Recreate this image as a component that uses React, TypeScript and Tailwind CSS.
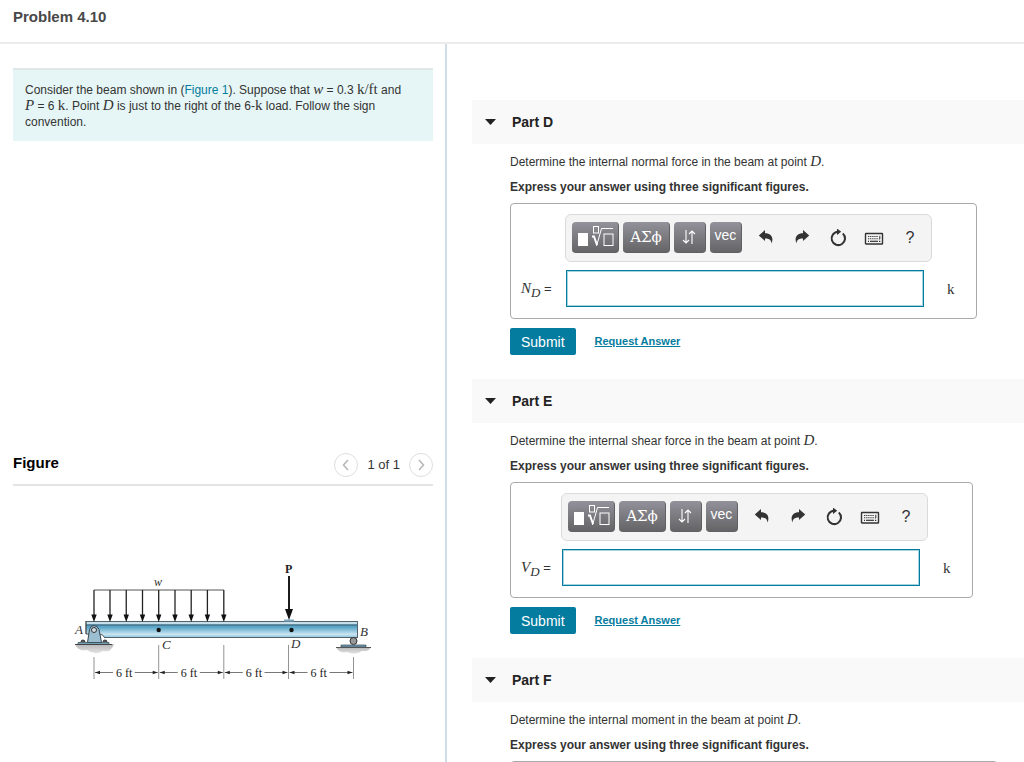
import React from "react";

type Part = {
  name: string;
  quantity: string;
  symbol?: string;
  labelWidth?: string;
  unit?: string;
};

const parts: Part[] = [
  { name: "Part D", quantity: "normal force", symbol: "N", labelWidth: "w-11", unit: "k" },
  { name: "Part E", quantity: "shear force", symbol: "V", labelWidth: "w-10", unit: "k" },
  { name: "Part F", quantity: "moment" },
];

function Sym({ children }: { children: React.ReactNode }) {
  return <i className="font-['Liberation_Serif',serif] text-[15px] leading-none">{children}</i>;
}

function Unit({ children }: { children: React.ReactNode }) {
  return <span className="font-['Liberation_Serif',serif] text-[15px] leading-none">{children}</span>;
}

function ToolButton({ label, width, children }: { label: string; width: string; children: React.ReactNode }) {
  return (
    <button
      type="button"
      aria-label={label}
      className={`${width} flex h-[31px] items-center justify-center rounded border-r border-b border-[#606063] bg-linear-to-b from-[#93919a] to-[#656567] text-white`}
    >
      {children}
    </button>
  );
}

function IconButton({ label, children }: { label: string; children: React.ReactNode }) {
  return (
    <button type="button" aria-label={label} className="flex h-[31px] w-9 items-center justify-center text-[#333]">
      {children}
    </button>
  );
}

function Toolbar() {
  return (
    <div className="flex h-12 items-start rounded-md border border-[#dadada] bg-[#f4f4f4] pt-[7px] pl-[6px]" role="toolbar">
      <div className="flex gap-1">
        <ToolButton label="Templates" width="w-[47px]">
          <svg width="38" height="24" viewBox="0 0 38 24" fill="none" stroke="white">
            <rect x="2" y="8" width="10" height="13" fill="white" stroke="none" />
            <rect x="17.500" y="1.500" width="5" height="6.500" />
            <path d="M16 11.500h2l3 8.500" strokeWidth="2" />
            <path d="M20.500 21L25.500 3.500H37" />
            <rect x="28" y="9" width="9" height="11.500" />
          </svg>
        </ToolButton>
        <ToolButton label="Symbols" width="w-[47px]">
          <span className="font-['DejaVu_Serif',serif] text-[15px] leading-none">ΑΣϕ</span>
        </ToolButton>
        <ToolButton label="Arrows" width="w-8">
          <svg width="14" height="16" viewBox="0 0 14 16" fill="none" stroke="white" strokeWidth="1.1">
            <path d="M4 1v13M1 11l3 3 3-3M10 15V2M7 5l3-3 3 3" />
          </svg>
        </ToolButton>
        <ToolButton label="Vector" width="w-8">
          <span className="pb-1 text-sm leading-none">vec</span>
        </ToolButton>
      </div>
      <div className="ml-[6px] flex">
        <IconButton label="Undo">
          <svg width="16" height="16" viewBox="0 0 16 16" fill="currentColor">
            <path d="M.8 5.500L7 0v3.200c4.800 0 7.400 2.600 7.400 6.200 0 1.500-.4 2.900-1 4 0-3.400-1.800-5-6.400-5V11z" />
          </svg>
        </IconButton>
        <IconButton label="Redo">
          <svg width="16" height="16" viewBox="0 0 16 16" fill="currentColor">
            <path d="M15.200 5.500L9 0v3.200c-4.800 0-7.400 2.600-7.400 6.200 0 1.500.4 2.900 1 4 0-3.400 1.800-5 6.400-5V11z" />
          </svg>
        </IconButton>
        <IconButton label="Reset">
          <svg width="18" height="18" viewBox="0 0 18 18" fill="none" stroke="currentColor" strokeWidth="2">
            <path d="M13.800 4.400A6.700 6.700 0 1 1 9 2.700" />
            <path d="M8 -.5l4.200 3.300L8 6.100z" fill="currentColor" stroke="none" />
          </svg>
        </IconButton>
        <IconButton label="Keyboard">
          <svg width="20" height="14" viewBox="0 0 20 14" fill="none" stroke="currentColor">
            <rect x="1.500" y="2.500" width="17" height="10.500" rx=".5" strokeWidth="1.400" />
            <path d="M4 5.500h10M4 7.700h10" strokeWidth="1.100" strokeDasharray="1.300 .8" />
            <path d="M6 10.300h8" strokeWidth="1.200" />
            <path d="M4 10.300h1M15 10.300h1.300" strokeWidth="1.200" />
            <path d="M15.800 4.800v3.200h-1" />
          </svg>
        </IconButton>
        <IconButton label="Help">
          <span className="text-base leading-none">?</span>
        </IconButton>
      </div>
    </div>
  );
}

function AnswerForm({ part }: { part: Part }) {
  const id = part.name.replace(" ", "-");
  return (
    <>
      <div className="mt-1 flex w-fit items-end rounded border border-[#a9a9a9] px-[10px] pt-[10px] pb-[11px]">
        <label htmlFor={id} className={`${part.labelWidth} flex h-9 items-center text-[13px] whitespace-nowrap`}>
          <span className="whitespace-pre">
            <Sym>{part.symbol}</Sym>
            <sub className="text-[13px]">
              <i className="font-['Liberation_Serif',serif]">D</i>
            </sub>{" "}
            =
          </span>
        </label>
        <div className="flex w-[367px] flex-col gap-2">
          <Toolbar />
          <input
            id={id}
            type="text"
            className="ml-px h-[37px] w-[358px] border border-[#047c9f] bg-white px-2 text-sm shadow-[inset_0_0_0_1px_#a5d3e0] outline-none"
          />
        </div>
        <span className="flex h-9 min-w-[34px] items-center pl-[15px]">
          <Unit>{part.unit}</Unit>
        </span>
      </div>
      <div className="mt-[9px] flex items-center gap-[19px]">
        <button type="button" className="h-[27px] rounded-xs bg-[#047c9f] px-[11px] text-sm text-white">
          Submit
        </button>
        <a href="#answer" className="text-[11px] font-bold text-[#047c9f] underline">
          Request Answer
        </a>
      </div>
    </>
  );
}

function PartSection({ part }: { part: Part }) {
  return (
    <section className="mb-6">
      <h2 className="bg-[#f9f9f9]">
        <button type="button" className="flex h-11 w-full items-center gap-4 pl-[13px] text-sm font-bold text-[#222]">
          <svg width="11" height="6" viewBox="0 0 11 6" fill="currentColor">
            <path d="M0 0h11L5.500 6z" />
          </svg>
          {part.name}
        </button>
      </h2>
      <div className="pl-[38px]">
        <p className="pt-2 text-xs leading-5">
          Determine the internal {part.quantity} in the beam at point <Sym>D</Sym>.
        </p>
        <p className="pt-1 text-xs leading-[23px] font-bold">Express your answer using three significant figures.</p>
        {part.symbol ? (
          <AnswerForm part={part} />
        ) : (
          <div className="mt-1 h-[116px] w-[488px] rounded border border-[#a9a9a9]" />
        )}
      </div>
    </section>
  );
}

const loads = [24, 40, 56.25, 72.5, 88.7, 105, 121.2, 137.4, 153.8];
const dims = [24, 88.7, 153.8, 218.5, 283.5];

function BeamFigure() {
  return (
    <svg
      width="310"
      height="128"
      viewBox="0 0 310 128"
      className="font-['Liberation_Serif',serif]"
      role="img"
      aria-label="Loaded beam"
    >
      <defs>
        <linearGradient id="beam" x1="0" y1="0" x2="0" y2="1">
          <stop offset="0" stopColor="#5aa5c7" />
          <stop offset=".35" stopColor="#5aa5c7" />
          <stop offset=".8" stopColor="#cbe6f2" />
          <stop offset="1" stopColor="#8cc3dc" />
        </linearGradient>
        <linearGradient id="ground" x1="0" y1="0" x2="0" y2="1">
          <stop offset="0" stopColor="#b5b5b5" />
          <stop offset="1" stopColor="#e6e6e6" />
        </linearGradient>
      </defs>
      <path d="M5 84q3 8 12 6 8 6 16 1 8 2 11-7z" fill="url(#ground)" />
      <path d="M266 87q3 7 11 5 8 4 15-1 7 1 9-4z" fill="url(#ground)" />
      <rect x="16" y="61.500" width="271.500" height="16" fill="url(#beam)" stroke="#54636c" />
      <rect x="16.500" y="62" width="270.500" height="2.500" fill="#c6dfea" />
      <path d="M16 65h271" stroke="#35576a" />
      <path d="M15 74h15q5 1 6 9H15z" fill="white" />
      <path d="M16 61v13h4M29 74q4 0 6 4" fill="none" stroke="#555" />
      <path d="M11 82a2 2 0 0 1 4 0M33 82a2 2 0 0 1 4 0" fill="#555" stroke="#333" />
      <path d="M17.500 82.500l2-13q1-4 4.500-4t5 4l2.500 13z" fill="#9bbed0" stroke="#344650" />
      <circle cx="24" cy="70" r="2.500" fill="#d3dfe4" stroke="#333" />
      <path d="M8 82.500h31v2H8z" fill="#73a1b5" stroke="#344650" strokeWidth=".7" />
      <path d="M5 84.500h37" stroke="#444" />
      <circle cx="283.500" cy="81" r="3.500" fill="#999" stroke="#333" />
      <path d="M271 85h25v2h-25z" fill="#73a1b5" stroke="#344650" strokeWidth=".7" />
      <path d="M266 87.500h35" stroke="#555" />
      <path d="M24 30H153.800" stroke="#555" />
      {loads.map((x) => (
        <g key={x}>
          <path d={`M${x} 30V56`} stroke="#222" strokeWidth="1.300" />
          <path d={`M${x - 2.7} 54.500h5.400L${x} 62z`} fill="#111" />
        </g>
      ))}
      <path d="M214 61.500v-2h10v2z" fill="#79a7bd" />
      <path d="M219 16V51" stroke="#1b1b1b" strokeWidth="2" />
      <path d="M215 49h8l-4 11z" fill="#111" />
      <circle cx="88.700" cy="70" r="2.200" fill="#111" />
      <circle cx="221.500" cy="70" r="2.200" fill="#111" />
      <path
        d="M24 97v22M88.700 85v34M153.800 85v34M218.500 85v34M283.500 97v22"
        stroke="#777"
        strokeWidth=".8"
      />
      {dims.slice(0, 4).map((x, i) => (
        <g key={x}>
          <path d={`M${x + 1} 112.500h18M${dims[i + 1] - 24} 112.500h23`} stroke="#555" strokeWidth=".8" />
          <path d={`M${x + 1} 112.500l5-1.800v3.600zM${dims[i + 1] - 1} 112.500l-5-1.800v3.600z`} fill="#222" />
          <text x={x + 22} y="117" fontSize="12" fill="#222">
            6 ft
          </text>
        </g>
      ))}
      <g fontSize="13" fontStyle="italic" fill="#333">
        <text x="84" y="26" fontSize="12">
          w
        </text>
        <text x="5" y="74">A</text>
        <text x="92" y="89">C</text>
        <text x="221" y="88">D</text>
        <text x="290" y="76">B</text>
      </g>
      <text x="215" y="13" fontSize="12" fontWeight="bold" fill="#222">
        P
      </text>
    </svg>
  );
}

function PagerButton({ label, d }: { label: string; d: string }) {
  return (
    <button
      type="button"
      aria-label={label}
      className="flex size-6 items-center justify-center rounded-full border border-[#dedede] text-[#b5b5b5]"
    >
      <svg width="8" height="12" viewBox="0 0 8 12" fill="none" stroke="currentColor" strokeWidth="1.500">
        <path d={d} />
      </svg>
    </button>
  );
}

export default function App() {
  return (
    <div className="flex h-screen flex-col overflow-hidden bg-white font-['Liberation_Sans',Arial,sans-serif] text-[#333]">
      <header className="border-b-2 border-[#ebebeb] px-[13px] pt-[5px] pb-[13px]">
        <h1 className="text-[15px] leading-6 font-bold text-[#484848]">Problem 4.10</h1>
      </header>
      <main className="flex min-h-0 flex-1">
        <div className="flex w-[43.65%] flex-col border-r-2 border-[#cfdde8] pr-3 pl-[13px]">
          <div className="mt-6 h-[73px] border-t-2 border-[#dfe7e7] bg-[#e6f6f6] pt-3 pr-6 pl-3 text-xs leading-4">
            Consider the beam shown in (
            <a href="#figure" className="text-[#047c9f]">
              Figure 1
            </a>
            ). Suppose that <Sym>w</Sym> = 0.3 <Unit>k/ft</Unit> and{" "}
            <span className="whitespace-nowrap">
              <Sym>P</Sym> = 6 <Unit>k</Unit>
            </span>
            . Point <Sym>D</Sym> is just to the right of the 6-<Unit>k</Unit> load. Follow the sign convention.
          </div>
          <section id="figure" className="mt-[310px]">
            <div className="flex h-[35px] items-start justify-between border-b-2 border-[#e4e4e4]">
              <h2 className="text-[15px] leading-6 font-bold text-black">Figure</h2>
              <div className="flex items-center gap-[9px] pt-[2px] text-[13px]">
                <PagerButton label="Previous figure" d="M6 1L1.500 6 6 11" />
                <span>1 of 1</span>
                <PagerButton label="Next figure" d="M2 1l4.500 5L2 11" />
              </div>
            </div>
            <div className="pt-[74px] pl-[57px]">
              <BeamFigure />
            </div>
          </section>
        </div>
        <div className="min-w-0 flex-1 overflow-hidden pt-[56px] pl-[25px]">
          {parts.map((part) => (
            <PartSection key={part.name} part={part} />
          ))}
        </div>
      </main>
    </div>
  );
}
